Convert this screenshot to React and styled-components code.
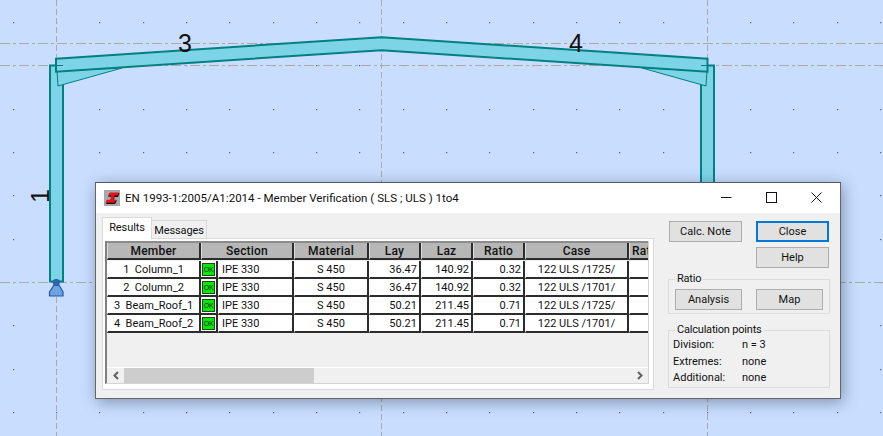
import React from "react";
import styled, { createGlobalStyle } from "styled-components";

const Global = createGlobalStyle`
  html, body { margin: 0; padding: 0; background: #c9deff; }
  body { font-family: Roboto, "Open Sans", "Liberation Sans", sans-serif; font-size: 12px; color: #111; }
`;

const Canvas = styled.div`
  position: relative;
  width: 883px;
  height: 436px;
  overflow: hidden;
  background: #c9deff;
`;

const Drawing = styled.svg`
  display: block;
`;

const Dialog = styled.div`
  position: absolute;
  left: 95px;
  top: 182px;
  width: 746px;
  height: 217px;
  box-sizing: border-box;
  border: 1px solid #62666c;
  border-top-color: #555a60;
  background: #f0f0f0;
  box-shadow: 2px 3px 14px rgba(40, 50, 70, 0.45);
  display: flex;
  flex-direction: column;
`;

const TitleBar = styled.div`
  height: 30px;
  flex: none;
  background: #fff;
  display: flex;
  align-items: center;
  padding-left: 8px;
`;

const TitleText = styled.span`
  margin-left: 5px;
  font-size: 11.55px;
  color: #111;
  white-space: nowrap;
  flex: 1;
`;

const WindowButtons = styled.div`
  display: flex;
  align-items: center;
  padding: 0 18px 2px 0;
  gap: 34px;
`;

const Body = styled.div`
  flex: 1;
  display: flex;
  min-height: 0;
`;

const Main = styled.div`
  width: 552px;
  margin-left: 6px;
  padding-top: 5px;
  flex: none;
  display: flex;
  flex-direction: column;
`;

const Tabs = styled.div`
  display: flex;
  align-items: flex-end;
  height: 21px;
  flex: none;
  position: relative;
  z-index: 1;
  margin-bottom: -1px;
`;

const Tab = styled.div`
  box-sizing: border-box;
  height: ${(p) => (p.$active ? 22 : 19)}px;
  width: ${(p) => (p.$active ? 50 : 55)}px;
  border: 1px solid #d9d9d9;
  border-left-width: ${(p) => (p.$active ? 1 : 0)}px;
  border-bottom-width: ${(p) => (p.$active ? 0 : 1)}px;
  background: ${(p) => (p.$active ? "#fff" : "#f0f0f0")};
  font-size: 11px;
  letter-spacing: -0.1px;
  line-height: 19px;
  text-align: center;
  white-space: nowrap;
`;

const Panel = styled.div`
  box-sizing: border-box;
  height: 152px;
  flex: none;
  background: #fff;
  border: 1px solid #d9d9d9;
  padding: 2px 4px 5px 2px;
  display: flex;
`;

const GridBox = styled.div`
  flex: 1;
  min-width: 0;
  background: #f0f0f0;
  border-left: 2px solid #808080;
  border-right: 1px solid #d4d4d4;
  border-bottom: 1px solid #d4d4d4;
  display: flex;
  flex-direction: column;
  overflow: hidden;
`;

const Table = styled.div`
  flex: 1;
  border-top: 2px solid #8c8c8c;
  display: grid;
  grid-template-columns: 94px 17px 76px 75px 52px 52px 52px 104px 19px;
  grid-auto-rows: 18px;
  align-content: start;
  overflow: hidden;
`;

const HeadCell = styled.div`
  box-sizing: border-box;
  height: 17px;
  background: #b7b7b7;
  border-right: 2px solid #2c2c2c;
  border-bottom: 2px solid #2c2c2c;
  border-left: 1px solid #dcdcdc;
  grid-column: span ${(p) => p.$span || 1};
  font-size: 12px;
  font-weight: 500;
  letter-spacing: 0.2px;
  line-height: 16px;
  text-align: center;
  white-space: nowrap;
  overflow: hidden;
  ${(p) => p.$clip && "border-right: 0; text-align: left; padding-left: 2px;"}
`;

const Cell = styled.div`
  box-sizing: border-box;
  background: #fff;
  border-right: 2px solid #2c2c2c;
  border-bottom: 2px solid #2c2c2c;
  border-left: 1px solid #fff;
  font-size: 11px;
  line-height: 17px;
  white-space: pre;
  overflow: hidden;
  text-align: ${(p) => p.$align || "center"};
  padding: 0 ${(p) => (p.$align === "right" ? 2 : 0)}px 0 ${(p) => (p.$align === "left" ? 3 : 0)}px;
  ${(p) => p.$clip && "border-right: 0;"}
`;

const StatusCell = styled.div`
  box-sizing: border-box;
  background: #fff;
  border-right: 2px solid #2c2c2c;
  border-bottom: 2px solid #2c2c2c;
  display: flex;
  align-items: center;
  justify-content: center;
`;

const OkBadge = styled.span`
  box-sizing: border-box;
  width: 13px;
  height: 13px;
  background: #0ae60a;
  border: 1px solid #1c4a1c;
  font-family: "Liberation Sans", sans-serif;
  font-size: 7px;
  font-weight: 400;
  line-height: 11px;
  letter-spacing: -0.3px;
  text-align: center;
  color: #063006;
`;

const ScrollBar = styled.div`
  height: 15px;
  flex: none;
  border-top: 1px solid #fff;
  background: #f0f0f0;
  display: flex;
  align-items: center;
`;

const ScrollArrow = styled.div`
  width: 17px;
  flex: none;
  display: flex;
  align-items: center;
  justify-content: center;
`;

const ScrollThumb = styled.div`
  width: 190px;
  height: 15px;
  background: #cdcdcd;
  flex: none;
`;

const ScrollTrack = styled.div`
  flex: 1;
`;

const Side = styled.div`
  width: 162px;
  margin-left: 14px;
  padding-top: 8px;
  flex: none;
  display: flex;
  flex-direction: column;
`;

const ButtonRow = styled.div`
  display: flex;
  justify-content: ${(p) => p.$justify || "space-between"};
  padding: 0 1px;
  margin-bottom: 5px;
`;

const Button = styled.div`
  box-sizing: border-box;
  width: ${(p) => p.$w || 73}px;
  height: 21px;
  background: #e1e1e1;
  border: ${(p) => (p.$focus ? "2px solid #0078d7" : "1px solid #adadad")};
  font-size: 11px;
  line-height: ${(p) => (p.$focus ? 17 : 19)}px;
  text-align: center;
`;

const Group = styled.fieldset`
  box-sizing: border-box;
  margin: ${(p) => p.$top || 0}px 0 0 0;
  padding: 0 6px;
  min-width: 0;
  width: 162px;
  height: ${(p) => p.$h}px;
  border: 1px solid #dcdcdc;
`;

const Legend = styled.legend`
  padding: 0 2px;
  margin-left: 0;
  font-size: 11px;
  letter-spacing: -0.2px;
  line-height: 16px;
`;

const GroupButtons = styled.div`
  display: flex;
  gap: 14px;
  padding-top: 2px;
`;

const InfoGrid = styled.div`
  display: grid;
  grid-template-columns: 69px auto;
  grid-auto-rows: 16.5px;
  margin: -1px 0 0 -2px;
  font-size: 11px;
  line-height: 16px;
`;

const rows = [
  ["1  Column_1", "36.47", "140.92", "0.32", "122 ULS /1725/"],
  ["2  Column_2", "36.47", "140.92", "0.32", "122 ULS /1701/"],
  ["3  Beam_Roof_1", "50.21", "211.45", "0.71", "122 ULS /1725/"],
  ["4  Beam_Roof_2", "50.21", "211.45", "0.71", "122 ULS /1701/"],
];

const dotXs = [13, 56, 99, 143, 186, 229, 273, 316, 359, 403, 446, 489, 533, 576, 619, 663, 707, 750, 793, 837, 880];
const dotYs = [22, 65, 109, 152, 195, 239, 282, 325, 369, 412];

const Frame = () => (
  <Drawing width="883" height="436" viewBox="0 0 883 436">
    {dotYs.map((y) =>
      dotXs.map((x) => <rect key={x + "-" + y} x={x} y={y} width="1.2" height="1.2" fill="#3f56e6" />)
    )}
    <g stroke="#a9a9a9" strokeWidth="1" fill="none" strokeDasharray="10 3 3 3">
      <path d="M0 43.5H883M0 65.5H883M0 282.5H883" />
      <path d="M56.5 0V436M381.5 0V436M707.5 0V436" strokeDasharray="6 3" />
    </g>
    <g fill="#7dd4e6" stroke="#008080" strokeLinejoin="miter">
      <rect x="50" y="65.5" width="13" height="216" strokeWidth="2" />
      <rect x="701" y="65.5" width="13" height="216" strokeWidth="2" />
      <path d="M58 86 L57 71 L122 68 Z" strokeWidth="1" />
      <path d="M706 86 L707 71 L642 68 Z" strokeWidth="1" />
      <path d="M56 58.7 L381.5 37.2 L707.5 58.7 L707.5 71.7 L381.5 50.2 L56 71.7 Z" strokeWidth="2" />
    </g>
    <g stroke="#008080" fill="none" strokeWidth="1">
      <path d="M50 65.5H63M701 65.5H714" />
    </g>
    <g fill="#6ea3e3" stroke="#235a9e" strokeWidth="1.2">
      <path d="M54 285 L59 285 L63 292 L63 296 L49.5 296 L49.5 292 Z" />
      <circle cx="56.3" cy="282.5" r="2.8" fill="#3f78c8" />
      <path d="M53.5 282.5H59M56.3 279.7V285.3" strokeWidth="0.8" />
    </g>
    <g fontFamily="'Liberation Sans', sans-serif" fontSize="25" fill="#111">
      <text x="185" y="52" textAnchor="middle">3</text>
      <text x="576" y="52" textAnchor="middle">4</text>
      <text transform="translate(49 196) rotate(-90)" textAnchor="middle">1</text>
    </g>
  </Drawing>
);

const Logo = () => (
  <svg width="16" height="16" viewBox="0 0 16 16">
    <rect width="16" height="16" fill="#a8a8a8" />
    <path d="M2 14 L11 14 L13 10.5 L10 10.5 L10.5 7 L14 7 L15.5 3 L6 3 L4 6.5 L7.5 7 L6.5 10.5 L3.5 10.5 Z" fill="#111" />
    <path d="M6 2.5 L15 2.5 L13.5 5.5 L10.3 5.5 L9.5 9.8 L12 9.8 L10.5 12.8 L1.2 12.8 L3 9.8 L6.3 9.8 L7.2 5.5 L4.2 5.5 Z" fill="#e8121a" />
  </svg>
);

const Minimize = () => (
  <svg width="11" height="11" viewBox="0 0 11 11"><path d="M0 5.5H10.5" stroke="#111" strokeWidth="1" /></svg>
);
const Maximize = () => (
  <svg width="11" height="11" viewBox="0 0 11 11"><rect x="0.5" y="0.5" width="10" height="10" fill="none" stroke="#111" strokeWidth="1" /></svg>
);
const CloseIcon = () => (
  <svg width="11" height="11" viewBox="0 0 11 11"><path d="M0.5 0.5L10.5 10.5M10.5 0.5L0.5 10.5" stroke="#111" strokeWidth="1" /></svg>
);
const Chevron = ({ dir }) => (
  <svg width="8" height="9" viewBox="0 0 8 9">
    <path d={dir === "left" ? "M6 1L2.5 4.5L6 8" : "M2 1L5.5 4.5L2 8"} fill="none" stroke="#606060" strokeWidth="2" />
  </svg>
);

export default function App() {
  return (
    <Canvas>
      <Global />
      <Frame />
      <Dialog>
        <TitleBar>
          <Logo />
          <TitleText>EN 1993-1:2005/A1:2014 - Member Verification ( SLS ; ULS ) 1to4</TitleText>
          <WindowButtons>
            <Minimize />
            <Maximize />
            <CloseIcon />
          </WindowButtons>
        </TitleBar>
        <Body>
          <Main>
            <Tabs>
              <Tab $active>Results</Tab>
              <Tab>Messages</Tab>
            </Tabs>
            <Panel>
              <GridBox>
                <Table>
                  <HeadCell>Member</HeadCell>
                  <HeadCell $span={2}>Section</HeadCell>
                  <HeadCell>Material</HeadCell>
                  <HeadCell>Lay</HeadCell>
                  <HeadCell>Laz</HeadCell>
                  <HeadCell>Ratio</HeadCell>
                  <HeadCell>Case</HeadCell>
                  <HeadCell $clip>Ratio</HeadCell>
                  {rows.map((r) => (
                    <React.Fragment key={r[0]}>
                      <Cell>{r[0]}</Cell>
                      <StatusCell><OkBadge>OK</OkBadge></StatusCell>
                      <Cell $align="left">IPE 330</Cell>
                      <Cell>S 450</Cell>
                      <Cell $align="right">{r[1]}</Cell>
                      <Cell $align="right">{r[2]}</Cell>
                      <Cell $align="right">{r[3]}</Cell>
                      <Cell>{r[4]}</Cell>
                      <Cell $clip />
                    </React.Fragment>
                  ))}
                </Table>
                <ScrollBar>
                  <ScrollArrow><Chevron dir="left" /></ScrollArrow>
                  <ScrollThumb />
                  <ScrollTrack />
                  <ScrollArrow><Chevron dir="right" /></ScrollArrow>
                </ScrollBar>
              </GridBox>
            </Panel>
          </Main>
          <Side>
            <ButtonRow>
              <Button>Calc. Note</Button>
              <Button $focus>Close</Button>
            </ButtonRow>
            <ButtonRow $justify="flex-end">
              <Button>Help</Button>
            </ButtonRow>
            <Group $h={43} $top={-2}>
              <Legend>Ratio</Legend>
              <GroupButtons>
                <Button $w={67}>Analysis</Button>
                <Button $w={67}>Map</Button>
              </GroupButtons>
            </Group>
            <Group $h={66} $top={8}>
              <Legend>Calculation points</Legend>
              <InfoGrid>
                <span>Division:</span><span>n = 3</span>
                <span>Extremes:</span><span>none</span>
                <span>Additional:</span><span>none</span>
              </InfoGrid>
            </Group>
          </Side>
        </Body>
      </Dialog>
    </Canvas>
  );
}
